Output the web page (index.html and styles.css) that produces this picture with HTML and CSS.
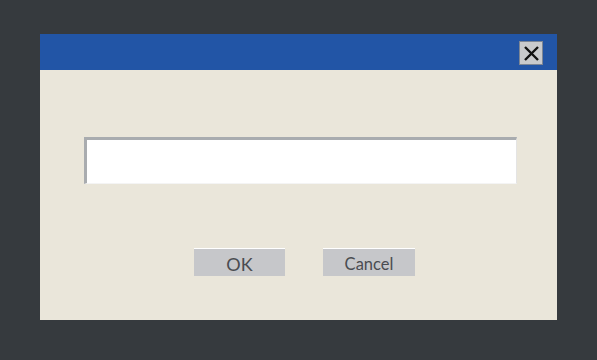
FILE: index.html
```html
<!DOCTYPE html>
<html lang="en">

<head>
    <meta charset="UTF-8">
    <meta name="viewport" content="width=device-width, initial-scale=1.0">
    <title>Dialog</title>
    <link rel="stylesheet" href="styles.css">
</head>

<body>
    <div class="dialog">
        <div class="titlebar">
            <button class="close" type="button" aria-label="Close">
                <svg width="15" height="15" viewBox="0 0 15 15">
                    <path d="M1 1 L14 14 M14 1 L1 14" stroke="#111" stroke-width="2.4" fill="none"/>
                </svg>
            </button>
        </div>
        <div class="content">
            <input class="field" type="text">
            <div class="actions">
                <button class="btn btn-ok" type="button">OK</button>
                <button class="btn btn-cancel" type="button">Cancel</button>
            </div>
        </div>
    </div>
</body>

</html>
```

FILE: styles.css
```css
body {
    margin: 0;
    padding: 34px 40px;
    background-color: #363a3e;
    font-family: Lato, "Liberation Sans", sans-serif;
}

.dialog {
    width: 517px;
    height: 286px;
    background-color: #eae6da;
    display: flex;
    flex-direction: column;
}

.titlebar {
    height: 36px;
    background-color: #2255a6;
    display: flex;
    align-items: center;
    justify-content: flex-end;
    padding-right: 14px;
    box-sizing: border-box;
}

.close {
    width: 24px;
    height: 24px;
    margin-top: 2px;
    padding: 0;
    background-color: #c9cacc;
    border: 1px solid #7d8694;
    display: flex;
    align-items: center;
    justify-content: center;
}

.content {
    padding: 67px 40px 0 44px;
    display: flex;
    flex-direction: column;
}

.field {
    height: 47px;
    box-sizing: border-box;
    background-color: #ffffff;
    border-top: 3px solid #a9acaf;
    border-left: 3px solid #a9acaf;
    border-right: 1px solid #e4e4e4;
    border-bottom: 1px solid #f4f4f4;
    outline: none;
}

.actions {
    margin-top: 64px;
    padding-left: 110px;
    display: flex;
    gap: 38px;
}

.btn {
    height: 28px;
    background-color: #c6c7ca;
    border: none;
    border-top: 1px solid #ffffff;
    color: #4a4c51;
    font-family: Lato, "Liberation Sans", sans-serif;
    padding: 2px 0 0;
}

.btn-ok {
    width: 91px;
    font-size: 18px;
}

.btn-cancel {
    width: 92px;
    font-size: 16.5px;
}
```
